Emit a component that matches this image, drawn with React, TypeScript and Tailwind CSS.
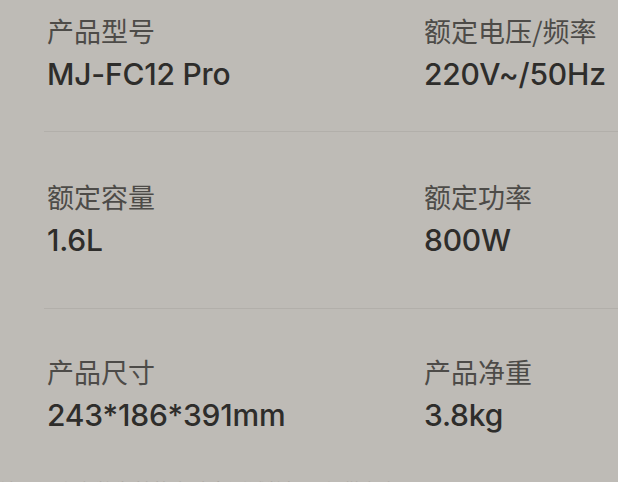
import React from "react";

const rows = [
  [
    ["产品型号", "MJ-FC12 Pro"],
    ["额定电压/频率", "220V~/50Hz"],
  ],
  [
    ["额定容量", "1.6L"],
    ["额定功率", "800W"],
  ],
  [
    ["产品尺寸", "243*186*391mm"],
    ["产品净重", "3.8kg"],
  ],
];

function Cell({ label, value }: { label: string; value: string }) {
  return (
    <div className="flex flex-col">
      <div
        className="text-[27px] leading-[34px] text-[#4d4b48]"
        style={{ fontFamily: '"Noto Sans CJK SC", sans-serif' }}
      >
        {label}
      </div>
      <div
        className="mt-[6px] text-[30px] leading-[40px] font-medium tracking-[-0.2px] text-[#2e2d2b]"
        style={{ fontFamily: 'Inter, "Noto Sans CJK SC", sans-serif' }}
      >
        {value}
      </div>
    </div>
  );
}

export default function App() {
  return (
    <div className="w-[618px] h-[482px] overflow-hidden bg-[#bebbb6]">
      <div className="pl-[44px]">
        {rows.map((r, i) => (
          <div
            key={i}
            className={
              "grid grid-cols-[377px_1fr] border-b border-[#b2afaa] pl-[3px] " +
              (i === 0 ? "pt-[14px] pb-[37px]" : i === 1 ? "pt-[48px] pb-[48px]" : "pt-[46px] pb-[40px] border-b-0")
            }
          >
            <Cell label={r[0][0]} value={r[0][1]} />
            <Cell label={r[1][0]} value={r[1][1]} />
          </div>
        ))}
      </div>
      <div
        className="mt-[1px] whitespace-nowrap text-[19px] leading-[28px] text-[#a9a6a1]"
        style={{ fontFamily: '"Noto Sans CJK SC", sans-serif' }}
      >
        注：以上参数为美的实验室测试数据，仅供参考
      </div>
    </div>
  );
}
